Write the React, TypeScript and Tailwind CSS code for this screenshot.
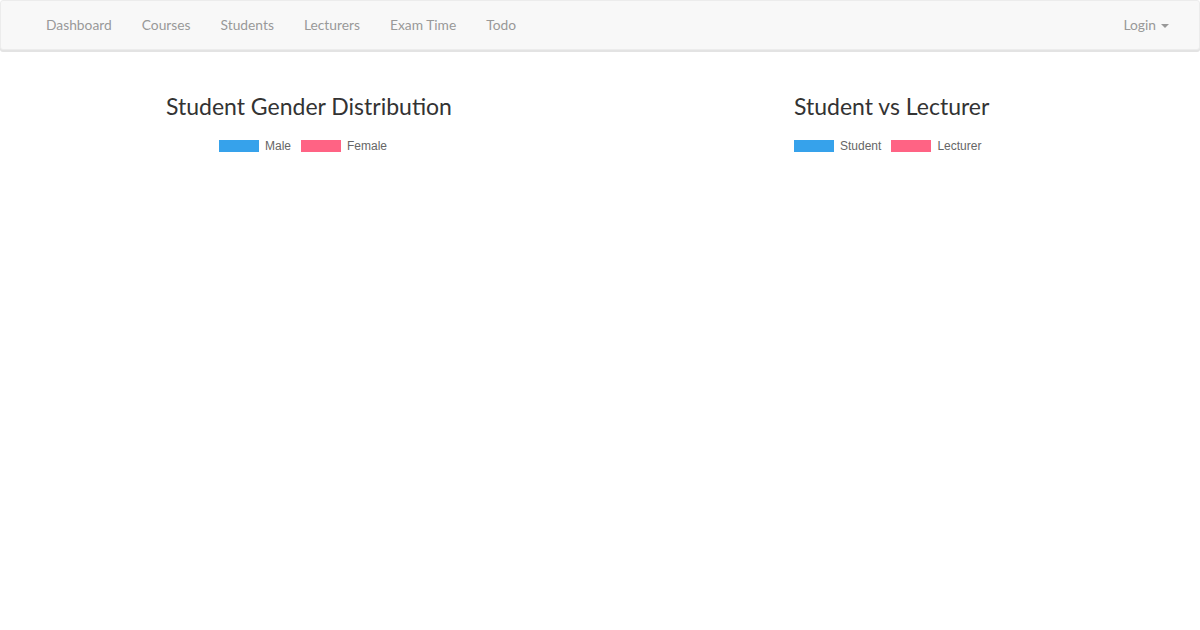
import React from "react";

const links = ["Dashboard", "Courses", "Students", "Lecturers", "Exam Time", "Todo"];

function Legend({ items }: { items: string[] }) {
  return (
    <div className="flex items-center gap-[10px] text-[12px] text-[#666]" style={{ fontFamily: '"Liberation Sans", Arial, sans-serif' }}>
      {items.map((t, i) => (
        <div key={t} className="flex items-center gap-[6px]">
          <span className={`block w-[40px] h-[12px] ${i === 0 ? "bg-[#36a2eb]" : "bg-[#ff6384]"}`} />
          <span>{t}</span>
        </div>
      ))}
    </div>
  );
}

export default function App() {
  return (
    <div className="w-[1200px] h-[630px] bg-white" style={{ fontFamily: 'Lato, "Open Sans", sans-serif' }}>
      <nav className="h-[50px] bg-[#f8f8f8] border border-[#ececec] rounded-[3px] shadow-[0_2px_0_#e3e3e3] flex items-center justify-between pl-[30px] pr-[15px]">
        <ul className="flex">
          {links.map((l) => (
            <li key={l} className="px-[15px] text-[13.8px] text-[#999]">{l}</li>
          ))}
        </ul>
        <div className="flex items-center gap-[5px] px-[15px] text-[13.8px] text-[#999]">
          <span>Login</span>
          <span className="block w-0 h-0 border-l-[4px] border-r-[4px] border-t-[4px] border-l-transparent border-r-transparent border-t-[#999] mt-[2px]" />
        </div>
      </nav>
      <div className="flex mt-[41px]">
        <div className="w-[600px] flex flex-col items-start pl-[166px]">
          <h3 className="text-[23px] text-[#333] leading-[30px]">Student Gender Distribution</h3>
          <div className="mt-[16px] ml-[53px]">
            <Legend items={["Male", "Female"]} />
          </div>
        </div>
        <div className="w-[600px] flex flex-col items-start pl-[194px]">
          <h3 className="text-[23px] text-[#333] leading-[30px]">Student vs Lecturer</h3>
          <div className="mt-[16px]">
            <Legend items={["Student", "Lecturer"]} />
          </div>
        </div>
      </div>
    </div>
  );
}
